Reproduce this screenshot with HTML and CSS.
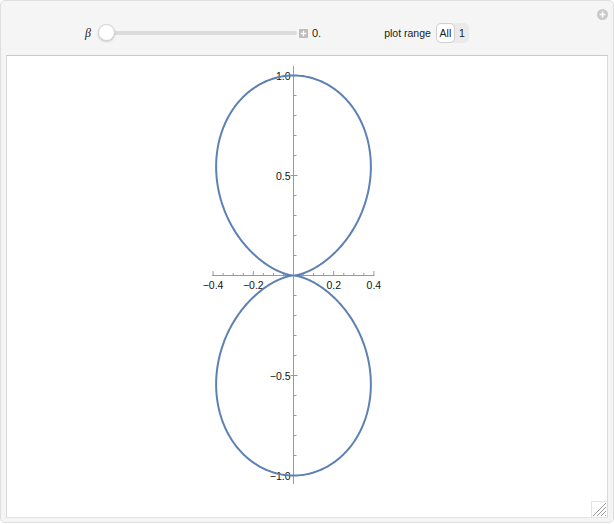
FILE: index.html
```html
<!DOCTYPE html>
<html>
<head>
<meta charset="utf-8">
<link rel="stylesheet" href="styles.css">
</head>
<body>
<div class="panel">
  <div class="addbtn"><svg width="11" height="11" viewBox="0 0 11 11"><circle cx="5.5" cy="5.5" r="5.5" fill="#c9c9c9"/><path d="M5.5 2.6v5.8M2.6 5.5h5.8" stroke="#fff" stroke-width="1.6"/></svg></div>
  <div class="controls">
    <div class="ctrl slider-ctrl">
      <span class="beta">β</span>
      <div class="track"><div class="thumb"></div></div>
      <span class="plus"><svg width="9" height="9" viewBox="0 0 9 9"><rect width="9" height="9" rx="1" fill="#bdbdbd"/><path d="M4.5 1.8v5.4M1.8 4.5h5.4" stroke="#fff" stroke-width="1.4"/></svg></span>
      <span class="val">0.</span>
    </div>
    <div class="ctrl range-ctrl">
      <span class="lbl">plot range</span>
      <div class="seg">
        <span class="opt on">All</span>
        <span class="opt">1</span>
      </div>
    </div>
  </div>
  <div class="plotbox">
    <svg class="plot" viewBox="6 55 601 462" width="601" height="462">
      <g id="axes" stroke="#9a9a9a" stroke-width="1" fill="none"></g>
      <g id="labels" class="tl"></g>
      <path id="curve" fill="none" stroke="#5e81b5" stroke-width="2"/>
    </svg>
    <div class="grip"><svg width="15" height="15" viewBox="0 0 15 15"><path d="M14 5L5 14M14 9L9 14M14 13L13 14M14 1L1 14" stroke="#9a9a9a" stroke-width="1"/></svg></div>
  </div>
</div>
<script src="script.js"></script>
</body>
</html>
```

FILE: styles.css
```css
html, body {
  margin: 0;
  padding: 0;
  background: #ffffff;
}
body {
  font-family: "Liberation Sans", Arial, sans-serif;
  color: #1a1a1a;
}
.panel {
  position: relative;
  box-sizing: border-box;
  width: 614px;
  height: 523px;
  border: 1px solid #dedede;
  border-radius: 5px;
  background: #f5f5f5;
  display: flex;
  flex-direction: column;
}
.addbtn {
  position: absolute;
  right: 5px;
  top: 8px;
  width: 11px;
  height: 11px;
}
.addbtn svg { display: block; }
.controls {
  height: 54px;
  display: flex;
  align-items: center;
  padding: 10px 0 0 84px;
  box-sizing: border-box;
}
.ctrl {
  display: flex;
  align-items: center;
}
.beta {
  font-family: "Liberation Serif", serif;
  font-style: italic;
  font-size: 12px;
  width: 13px;
}
.track {
  position: relative;
  width: 199px;
  height: 4px;
  border-radius: 2px;
  background: #dcdcdc;
}
.thumb {
  position: absolute;
  left: 0;
  top: -7px;
  width: 17px;
  height: 17px;
  box-sizing: border-box;
  border-radius: 50%;
  background: #ffffff;
  border: 1px solid #d2d2d2;
  box-shadow: 0 1px 2px rgba(0,0,0,0.18);
}
.plus {
  margin-left: 2px;
  display: flex;
}
.val {
  margin-left: 4px;
  font-size: 11px;
}
.range-ctrl {
  margin-left: 63px;
}
.lbl {
  font-size: 10.5px;
  margin-right: 5px;
}
.seg {
  display: flex;
  align-items: center;
  background: #eaeaea;
  border-radius: 5px;
  height: 20px;
}
.opt {
  font-size: 10.5px;
  height: 20px;
  line-height: 20px;
  padding: 0 4px 0 4px;
  box-sizing: border-box;
}
.opt.on {
  background: #ffffff;
  border: 1px solid #cfcfcf;
  border-radius: 5px;
  line-height: 18px;
  padding: 0;
  width: 19px;
  text-align: center;
}
.plotbox {
  position: relative;
  box-sizing: border-box;
  width: 602px;
  height: 463px;
  margin-left: 5px;
  background: #ffffff;
  border-top: 1px solid #c9c9c9;
  border-left: 1px solid #dadada;
  border-right: 1px solid #dadada;
  border-bottom: 1px solid #e4e4e4;
}
.plot {
  display: block;
  position: absolute;
  left: -1px;
  top: -1px;
}
.tl {
  font-family: "Liberation Sans", Arial, sans-serif;
  font-size: 10.5px;
  fill: #111;
}
.grip {
  position: absolute;
  right: 0;
  bottom: 0;
  width: 15px;
  height: 15px;
  border-left: 1px solid #e2e2e2;
  border-top: 1px solid #e2e2e2;
}
.grip svg { display: block; }
```

FILE: script.js
```js
(function () {
  var NS = "http://www.w3.org/2000/svg";
  var cx = 293.5, cy = 275.5, sx = 201, sy = 200;
  function P(x, y) { return [cx + sx * x, cy - sy * y]; }
  var d = "";
  var N = 720;
  for (var i = 0; i <= N; i++) {
    var t = 2 * Math.PI * i / N;
    var s = Math.sin(t);
    var p = P(s * s * Math.cos(t), s * s * s);
    d += (i === 0 ? "M" : "L") + p[0].toFixed(2) + " " + p[1].toFixed(2);
  }
  document.getElementById("curve").setAttribute("d", d);

  var axes = document.getElementById("axes");
  function line(x1, y1, x2, y2) {
    var l = document.createElementNS(NS, "line");
    l.setAttribute("x1", x1); l.setAttribute("y1", y1);
    l.setAttribute("x2", x2); l.setAttribute("y2", y2);
    axes.appendChild(l);
  }
  line(cx, 66, cx, 484);
  line(212, cy, 374.5, cy);
  for (var k = -10; k <= 10; k++) {
    if (k === 0) continue;
    var y = cy - sy * k / 10;
    if (k % 5 === 0) line(cx - 3, y, cx + 4, y);
    else line(cx, y, cx + 3, y);
  }
  for (var j = -8; j <= 8; j++) {
    if (j === 0) continue;
    var x = cx + sx * j * 0.05;
    if (j % 4 === 0) line(x, cy, x, cy - 4.5);
    else line(x, cy, x, cy - 2.5);
  }
  var labels = document.getElementById("labels");
  function text(x, y, s, anchor) {
    var t = document.createElementNS(NS, "text");
    t.setAttribute("x", x); t.setAttribute("y", y);
    t.setAttribute("text-anchor", anchor);
    t.textContent = s;
    labels.appendChild(t);
  }
  [[1, "1.0"], [0.5, "0.5"], [-0.5, "\u22120.5"], [-1, "\u22121.0"]].forEach(function (a) {
    text(cx - 3, cy - sy * a[0] + 4, a[1], "end");
  });
  [[-0.4, "\u22120.4"], [-0.2, "\u22120.2"], [0.2, "0.2"], [0.4, "0.4"]].forEach(function (a) {
    text(cx + sx * a[0], cy + 13, a[1], "middle");
  });
})();
```
